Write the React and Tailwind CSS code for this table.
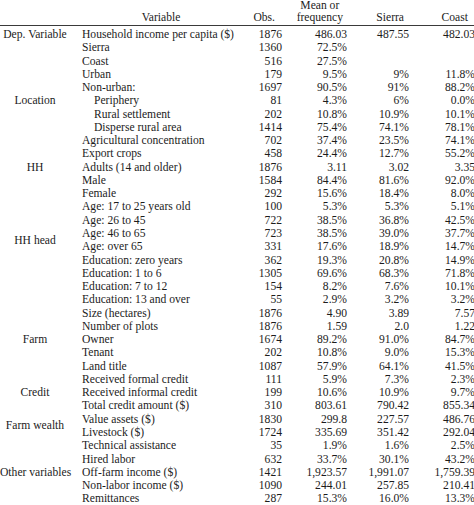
const groups = [
  { label: 'Dep. Variable', span: 1 },
  { label: 'Location', span: 9 },
  { label: 'HH', span: 1 },
  { label: 'HH head', span: 10 },
  { label: 'Farm', span: 5 },
  { label: 'Credit', span: 3 },
  { label: 'Farm wealth', span: 2 },
  { label: 'Other variables', span: 5 },
];

// [variable, obs, mean, sierra, coast, indented]
const rows = [
  ['Household income per capita ($)', '1876', '486.03', '487.55', '482.03'],
  ['Sierra', '1360', '72.5%', '', ''],
  ['Coast', '516', '27.5%', '', ''],
  ['Urban', '179', '9.5%', '9%', '11.8%'],
  ['Non-urban:', '1697', '90.5%', '91%', '88.2%'],
  ['Periphery', '81', '4.3%', '6%', '0.0%', true],
  ['Rural settlement', '202', '10.8%', '10.9%', '10.1%', true],
  ['Disperse rural area', '1414', '75.4%', '74.1%', '78.1%', true],
  ['Agricultural concentration', '702', '37.4%', '23.5%', '74.1%'],
  ['Export crops', '458', '24.4%', '12.7%', '55.2%'],
  ['Adults (14 and older)', '1876', '3.11', '3.02', '3.35'],
  ['Male', '1584', '84.4%', '81.6%', '92.0%'],
  ['Female', '292', '15.6%', '18.4%', '8.0%'],
  ['Age: 17 to 25 years old', '100', '5.3%', '5.3%', '5.1%'],
  ['Age: 26 to 45', '722', '38.5%', '36.8%', '42.5%'],
  ['Age: 46 to 65', '723', '38.5%', '39.0%', '37.7%'],
  ['Age: over 65', '331', '17.6%', '18.9%', '14.7%'],
  ['Education: zero years', '362', '19.3%', '20.8%', '14.9%'],
  ['Education: 1 to 6', '1305', '69.6%', '68.3%', '71.8%'],
  ['Education: 7 to 12', '154', '8.2%', '7.6%', '10.1%'],
  ['Education: 13 and over', '55', '2.9%', '3.2%', '3.2%'],
  ['Size (hectares)', '1876', '4.90', '3.89', '7.57'],
  ['Number of plots', '1876', '1.59', '2.0', '1.22'],
  ['Owner', '1674', '89.2%', '91.0%', '84.7%'],
  ['Tenant', '202', '10.8%', '9.0%', '15.3%'],
  ['Land title', '1087', '57.9%', '64.1%', '41.5%'],
  ['Received formal credit', '111', '5.9%', '7.3%', '2.3%'],
  ['Received informal credit', '199', '10.6%', '10.9%', '9.7%'],
  ['Total credit amount ($)', '310', '803.61', '790.42', '855.34'],
  ['Value assets ($)', '1830', '299.8', '227.57', '486.76'],
  ['Livestock  ($)', '1724', '335.69', '351.42', '292.04'],
  ['Technical assistance', '35', '1.9%', '1.6%', '2.5%'],
  ['Hired labor', '632', '33.7%', '30.1%', '43.2%'],
  ['Off-farm income ($)', '1421', '1,923.57', '1,991.07', '1,759.39'],
  ['Non-labor income ($)', '1090', '244.01', '257.85', '210.41'],
  ['Remittances', '287', '15.3%', '16.0%', '13.3%'],
];

// row index -> group that starts there
const groupStarts = {};
let at = 0;
groups.forEach((g) => {
  groupStarts[at] = g;
  at += g.span;
});

const cell = 'p-0 leading-[13.26px] whitespace-nowrap';
const head = 'p-0 pb-[1px] align-bottom font-normal leading-[12px] whitespace-nowrap border-b border-[#3a3a3a]';

export default function App() {
  return (
    <div className="w-[474px] h-[505px] overflow-hidden bg-white">
      <table className="w-[475px] table-fixed text-[11.6px] text-[#1c1c1c] font-['Liberation_Serif','Times_New_Roman',serif] whitespace-pre">
        <colgroup>
          <col className="w-[70px]" />
          <col className="w-[178px]" />
          <col className="w-[34px]" />
          <col className="w-[65px]" />
          <col className="w-[62px]" />
          <col className="w-[66px]" />
        </colgroup>
        <thead>
          <tr>
            <th className={head}></th>
            <th className={`${head} text-center pl-[4px]`}>Variable</th>
            <th className={`${head} text-right pr-[7px]`}>Obs.</th>
            <th className={`${head} text-right pr-[4px]`}>
              <div className="inline-block text-center">
                Mean or
                <br />
                frequency
              </div>
            </th>
            <th className={`${head} text-right pr-[5px]`}>Sierra</th>
            <th className={`${head} text-right pr-[7px]`}>Coast</th>
          </tr>
        </thead>
        <tbody>
          {rows.map(([name, obs, mean, sierra, coast, indent], i) => {
            const top = i === 0 ? ' pt-[2px]' : '';
            const g = groupStarts[i];
            return (
              <tr key={i}>
                {g && (
                  <td rowSpan={g.span} className={`${cell}${top} text-center align-middle`}>
                    {g.label}
                  </td>
                )}
                <td className={`${cell}${top} ${indent ? 'pl-[24px]' : 'pl-[12px]'}`}>{name}</td>
                <td className={`${cell}${top} text-right`}>{obs}</td>
                <td className={`${cell}${top} text-right`}>{mean}</td>
                <td className={`${cell}${top} text-right`}>{sierra}</td>
                <td className={`${cell}${top} text-right`}>{coast}</td>
              </tr>
            );
          })}
        </tbody>
      </table>
    </div>
  );
}
